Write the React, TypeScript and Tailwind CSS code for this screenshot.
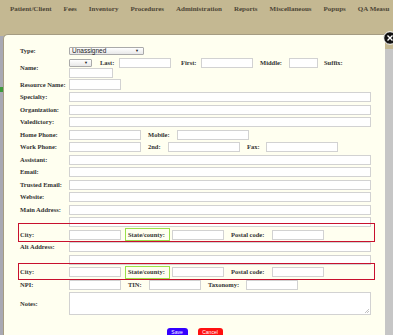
import React from 'react';

const NAV = ['Patient/Client', 'Fees', 'Inventory', 'Procedures', 'Administration', 'Reports', 'Miscellaneous', 'Popups', 'QA Measu'];

const inputCls = 'h-[10px] bg-white border border-[#d2d2d2] shrink-0';

function Box({ w }: { w: string }) {
  return <div className={`${inputCls} ${w}`} />;
}

function Row({ label, children, className = '' }: { label: string; children?: React.ReactNode; className?: string }) {
  return (
    <div className={`flex items-center h-[10px] ${className}`}>
      <span className="w-[49px] shrink-0 whitespace-nowrap">{label}</span>
      {children}
    </div>
  );
}

function Lbl({ text, cls }: { text: string; cls: string }) {
  return <span className={`shrink-0 whitespace-nowrap ${cls}`}>{text}</span>;
}

function CityRow({ boxCls }: { boxCls: string }) {
  return (
    <div className="relative">
      <div className={`absolute border border-[#c8102e] pointer-events-none ${boxCls}`} />
      <Row label="City:">
        <Box w="w-[52px]" />
        <span className="ml-[4px] w-[45px] h-[13px] border border-[#9be04a] flex items-center pl-[2px] whitespace-nowrap shrink-0">
          State/county:
        </span>
        <div className="ml-[2px]"><Box w="w-[52px]" /></div>
        <Lbl text="Postal code:" cls="w-[48px] pl-[7px]" />
        <Box w="w-[52px]" />
      </Row>
    </div>
  );
}

export default function App() {
  return (
    <div className="relative w-[393px] h-[335px] overflow-hidden bg-[#c4b892]" style={{ fontFamily: '"Liberation Serif", "Times New Roman", serif' }}>
      {/* top menu */}
      <div className="flex gap-[12px] pl-[10px] pt-[4px] text-[7px] font-bold text-[#4d4636] whitespace-nowrap">
        {NAV.map(n => <span key={n}>{n}</span>)}
      </div>

      {/* page peeking on the left */}
      <div className="absolute left-0 top-[36px] w-[4px] h-[299px] bg-[#a9a9b4]">
        <div className="mt-[51px] h-[5px] bg-[#3d9a3d]" />
      </div>

      {/* scrollbar strip on the right */}
      <div className="absolute right-0 top-[49px] w-[8px] h-[286px] bg-[#c6c6c6]" />

      {/* dialog */}
      <div className="absolute left-[3px] top-[34px] w-[382px] h-[310px] bg-[#fffff0] border-t border-l border-[#a59c82] rounded-tl-[5px] pl-[16px] pt-[12px] text-[6.5px] font-bold text-[#333]">
        <div className="flex flex-col">
          <div className="flex items-center h-[8px]">
            <span className="w-[49px] shrink-0">Type:</span>
            <div className="w-[75px] h-[8px] border border-[#aaa] rounded-[1px] bg-gradient-to-b from-white to-[#e8e8e8] flex items-center justify-between px-[2px] font-normal text-[6.5px] text-[#222]" style={{ fontFamily: '"Liberation Sans", Arial, sans-serif' }}>
              <span>Unassigned</span>
              <span className="text-[4px] pr-[2px]">▼</span>
            </div>
          </div>

          <div className="flex items-center mt-[3px]">
            <span className="w-[49px] shrink-0">Name:</span>
            <div className="flex flex-col">
              <div className="flex items-center h-[10px]">
                <div className="w-[23px] h-[8px] border border-[#aaa] rounded-[1px] bg-gradient-to-b from-white to-[#e8e8e8] flex items-center justify-end pr-[3px] text-[4px] font-normal text-[#222]">▼</div>
                <Lbl text="Last:" cls="w-[27px] pl-[8px]" />
                <Box w="w-[52px]" />
                <Lbl text="First:" cls="w-[30px] pl-[10px]" />
                <Box w="w-[52px]" />
                <Lbl text="Middle:" cls="w-[36px] pl-[7px]" />
                <Box w="w-[29px]" />
                <Lbl text="Suffix:" cls="pl-[6px]" />
              </div>
              <Box w="w-[44px]" />
            </div>
          </div>

          <Row label="Resource Name:" className="mt-[1px] h-[11px]">
            <div className="h-[11px] w-[52px] bg-white border border-[#d2d2d2]" />
          </Row>

          <div className="flex flex-col gap-[2.5px] mt-[2px]">
            <Row label="Specialty:"><Box w="w-[302px]" /></Row>
            <Row label="Organization:"><Box w="w-[302px]" /></Row>
            <Row label="Valedictory:"><Box w="w-[302px]" /></Row>
            <Row label="Home Phone:">
              <Box w="w-[72px]" />
              <Lbl text="Mobile:" cls="w-[36px] pl-[7px]" />
              <Box w="w-[72px]" />
            </Row>
            <Row label="Work Phone:">
              <Box w="w-[72px]" />
              <Lbl text="2nd:" cls="w-[27px] pl-[7px]" />
              <Box w="w-[72px]" />
              <Lbl text="Fax:" cls="w-[26px] pl-[7px]" />
              <Box w="w-[72px]" />
            </Row>
            <Row label="Assistant:"><Box w="w-[302px]" /></Row>
            <Row label="Email:"><Box w="w-[302px]" /></Row>
            <Row label="Trusted Email:"><Box w="w-[302px]" /></Row>
            <Row label="Website:"><Box w="w-[302px]" /></Row>
            <Row label="Main Address:"><Box w="w-[302px]" /></Row>
            <Row label=""><Box w="w-[302px]" /></Row>
            <CityRow boxCls="-left-[2px] w-[357px] -top-[7px] h-[19px]" />
            <Row label="Alt Address:"><Box w="w-[302px]" /></Row>
            <Row label=""><Box w="w-[302px]" /></Row>
            <CityRow boxCls="-left-[2px] w-[357px] -top-[4px] h-[17px]" />
            <Row label="NPI:">
              <Box w="w-[52px]" />
              <Lbl text="TIN:" cls="w-[28px] pl-[7px]" />
              <Box w="w-[52px]" />
              <Lbl text="Taxonomy:" cls="w-[45px] pl-[7px]" />
              <Box w="w-[52px]" />
            </Row>
            <div className="flex items-center">
              <span className="w-[49px] shrink-0">Notes:</span>
              <div className="relative w-[302px] h-[23px] bg-white border border-[#d2d2d2]">
                <svg className="absolute right-[1px] bottom-[1px]" width="4" height="4" viewBox="0 0 4 4">
                  <path d="M4 0 L0 4 M4 2 L2 4" stroke="#999" strokeWidth="0.6" />
                </svg>
              </div>
            </div>
          </div>

          <div className="flex justify-center gap-[10px] mt-[13px] pr-[16px] font-normal text-[5px] text-white" style={{ fontFamily: '"Liberation Sans", Arial, sans-serif' }}>
            <button className="w-[21px] h-[10px] bg-[#3300ff] rounded-[3px] pb-[1px]">Save</button>
            <button className="w-[25px] h-[10px] bg-[#ff1010] rounded-[3px] pb-[1px]">Cancel</button>
          </div>
        </div>
      </div>

      {/* close button */}
      <svg className="absolute left-[383px] top-[31px]" width="14" height="14" viewBox="0 0 14 14">
        <circle cx="7" cy="7" r="6.3" fill="#111" stroke="#fff" strokeWidth="1" />
        <path d="M4.5 4.5 L9.5 9.5 M9.5 4.5 L4.5 9.5" stroke="#fff" strokeWidth="1.4" />
      </svg>
    </div>
  );
}
